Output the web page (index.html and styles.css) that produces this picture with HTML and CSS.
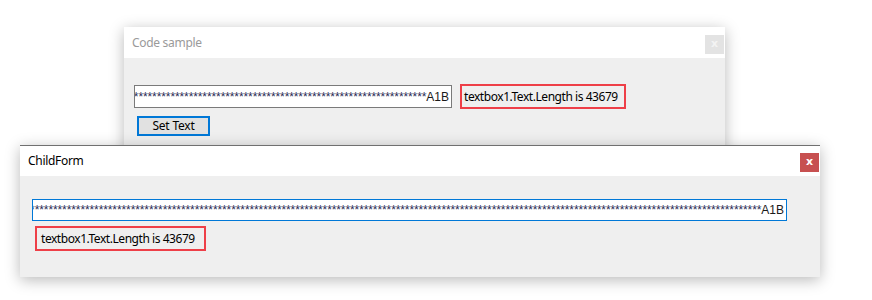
FILE: index.html
```html
<!DOCTYPE html>
<html>
<head>
<meta charset="utf-8">
<link rel="stylesheet" href="styles.css">
</head>
<body>
<div class="desktop">
  <div class="window back">
    <div class="titlebar">
      <span class="title">Code sample</span>
      <span class="close inactive">x</span>
    </div>
    <div class="body">
      <div class="row">
        <div class="textbox gray"><span class="val"><span class="stars">****************************************************************************************************************************************************************************************************************************************************</span>A1B</span></div>
        <div class="label">textbox1.Text.Length is 43679</div>
      </div>
      <button class="btn">Set Text</button>
    </div>
  </div>
  <div class="window child">
    <div class="titlebar">
      <span class="title">ChildForm</span>
      <span class="close active">x</span>
    </div>
    <div class="body">
      <div class="textbox blue"><span class="val"><span class="stars">****************************************************************************************************************************************************************************************************************************************************</span>A1B</span></div>
      <div class="label">textbox1.Text.Length is 43679</div>
    </div>
  </div>
</div>
</body>
</html>
```
FILE: styles.css
```css
html, body {
  margin: 0;
  padding: 0;
  background: #ffffff;
}
.desktop {
  position: relative;
  width: 872px;
  height: 300px;
  overflow: hidden;
  font-family: "Noto Sans", "Open Sans", sans-serif;
  font-size: 12px;
  color: #000;
}
.window {
  position: absolute;
  background: #efefef;
  box-shadow: 0 3px 14px rgba(0, 0, 0, 0.28);
  display: flex;
  flex-direction: column;
}
.back {
  left: 124px;
  top: 27px;
  width: 601px;
  height: 140px;
}
.child {
  left: 20px;
  top: 145px;
  width: 800px;
  height: 132px;
  border-top: 1px solid #707070;
  box-sizing: border-box;
}
.titlebar {
  height: 31px;
  background: #fff;
  display: flex;
  align-items: flex-start;
  justify-content: space-between;
  box-sizing: border-box;
  flex: none;
}
.child .titlebar {
  height: 30px;
}
.title {
  line-height: 31px;
  padding-left: 8px;
  letter-spacing: -0.3px;
}
.back .title {
  color: #9a9a9a;
}
.child .title {
  line-height: 30px;
  color: #000;
}
.close {
  width: 19px;
  height: 19px;
  margin: 8px 1px 0 0;
  display: flex;
  align-items: center;
  justify-content: center;
  font-family: "DejaVu Sans", sans-serif;
  font-size: 11px;
  font-weight: bold;
  line-height: 1;
  padding-bottom: 2px;
  box-sizing: border-box;
}
.close.inactive {
  background: #e3e3e3;
  color: #f3f3f3;
}
.close.active {
  margin-top: 7px;
  background: #c75050;
  color: #fff;
}
.body {
  display: flex;
  flex-direction: column;
  align-items: flex-start;
}
.back .body {
  padding: 26px 0 0 10px;
}
.child .body {
  padding: 23px 0 0 12px;
}
.row {
  display: flex;
  align-items: center;
  gap: 8px;
}
.textbox {
  background: #fff;
  box-sizing: border-box;
  display: flex;
  justify-content: flex-end;
  align-items: center;
  overflow: hidden;
  white-space: nowrap;
  font-family: "Liberation Sans", Arial, sans-serif;
  font-size: 12px;
  padding: 0 2px;
}
.textbox.gray {
  width: 318px;
  height: 23px;
  border: 1px solid #7a7a7a;
}
.textbox.blue {
  width: 755px;
  height: 22px;
  border: 1px solid #0078d7;
}
.val {
  flex: none;
  color: #1a1a1a;
}
.stars {
  color: #2b2b55;
  letter-spacing: -0.1px;
}
.label {
  box-sizing: border-box;
  height: 25px;
  border: 2px solid #ee3f48;
  display: flex;
  align-items: center;
  white-space: nowrap;
  letter-spacing: -0.45px;
}
.back .label {
  width: 166px;
  padding-left: 2px;
}
.child .label {
  width: 171px;
  margin: 5px 0 0 3px;
  padding-left: 4px;
}
.btn {
  margin: 7px 0 0 3px;
  width: 73px;
  height: 20px;
  border: 2px solid #0078d7;
  background: #e1e1e1;
  font-family: "Noto Sans", "Open Sans", sans-serif;
  font-size: 12px;
  color: #000;
  padding: 0;
  line-height: 14px;
  letter-spacing: -0.2px;
}
```
